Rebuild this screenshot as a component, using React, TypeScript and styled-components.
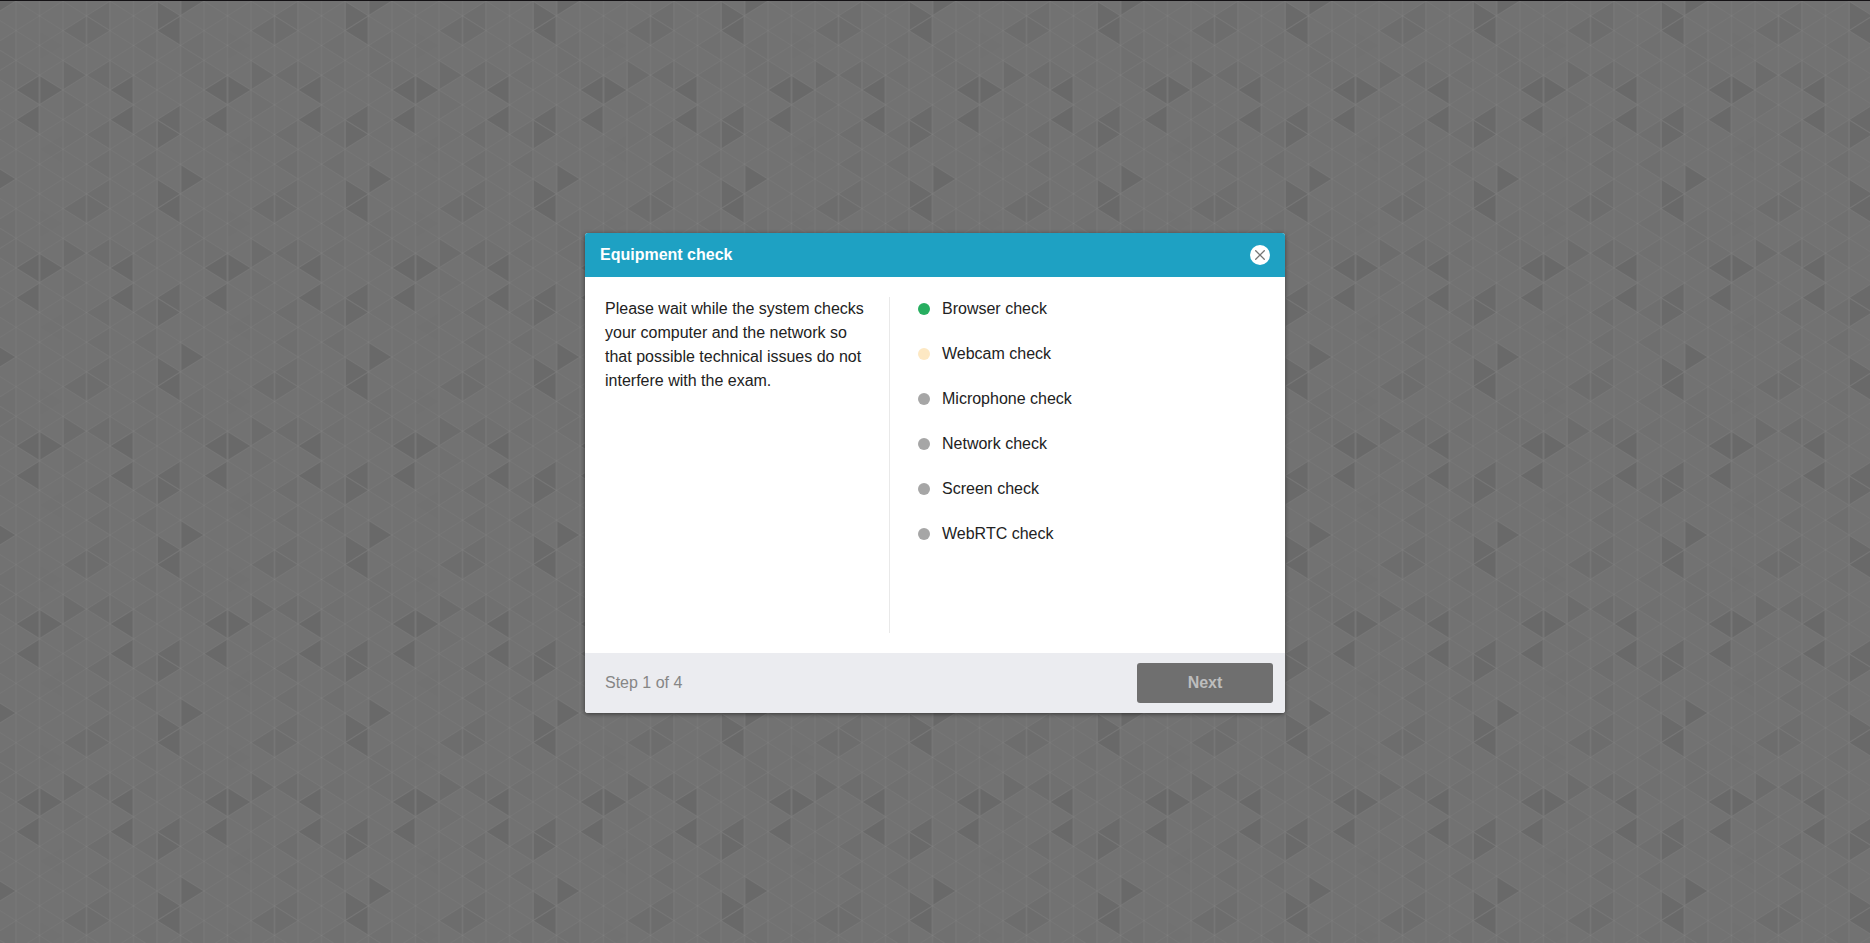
import React from "react";
import styled, { createGlobalStyle } from "styled-components";

const GlobalStyle = createGlobalStyle`
  *, *::before, *::after { box-sizing: border-box; }
  body {
    margin: 0;
    background: #727272;
    color: #222;
    font: 16px/24px "Liberation Sans", Arial, sans-serif;
  }
`;

const Page = styled.main`
  position: relative;
  display: flex;
  align-items: center;
  justify-content: center;
  min-height: 100vh;
  padding-top: 2px;
  border-top: 1px solid #141215;
`;

const Backdrop = styled.svg`
  position: absolute;
  inset: 0;
  width: 100%;
  height: 100%;
`;

const Dialog = styled.section`
  position: relative;
  display: flex;
  flex-direction: column;
  width: 100%;
  max-width: 700px;
  min-height: 480px;
  overflow: hidden;
  border-radius: 3px;
  background: #fff;
  box-shadow: 0 1px 4px rgba(0, 0, 0, 0.5);
`;

const Header = styled.header`
  display: flex;
  align-items: center;
  justify-content: space-between;
  height: 44px;
  padding: 0 15px;
  background: #1ea1c3;
`;

const Title = styled.h1`
  margin: 0;
  color: #fff;
  font-size: 16px;
  font-weight: 700;
`;

const CloseButton = styled.button`
  display: grid;
  place-items: center;
  width: 20px;
  height: 20px;
  padding: 0;
  border: 0;
  border-radius: 50%;
  background: #fff;
  color: #757575;
  cursor: pointer;
`;

const Body = styled.div`
  display: flex;
  flex: 1;
  padding: 20px;
`;

const Message = styled.p`
  flex: 0 0 285px;
  margin: 0;
  padding-right: 20px;
  border-right: 1px solid #e9e9e9;
`;

const Checks = styled.ul`
  display: flex;
  flex: 1;
  flex-direction: column;
  gap: 21px;
  margin: 0;
  padding: 0 0 0 28px;
  list-style: none;
`;

const Check = styled.li`
  display: flex;
  align-items: center;
  gap: 12px;
`;

const Dot = styled.span<{ $color: string }>`
  width: 12px;
  height: 12px;
  border-radius: 50%;
  background: ${(p) => p.$color};
`;

const Footer = styled.footer`
  display: flex;
  align-items: center;
  justify-content: space-between;
  height: 60px;
  padding: 0 12px 0 20px;
  background: #ebecf0;
  color: #868686;
`;

const NextButton = styled.button`
  width: 136px;
  height: 40px;
  padding: 0;
  border: 0;
  border-radius: 3px;
  background: #6f6f6f;
  color: #bdbdbd;
  font: inherit;
  font-weight: 700;
`;

const STATUS_COLORS = { passed: "#27ae60", running: "#fde8c3", pending: "#a6a6a6" };

const CHECKS: { label: string; status: keyof typeof STATUS_COLORS }[] = [
  { label: "Browser check", status: "passed" },
  { label: "Webcam check", status: "running" },
  { label: "Microphone check", status: "pending" },
  { label: "Network check", status: "pending" },
  { label: "Screen check", status: "pending" },
  { label: "WebRTC check", status: "pending" },
];

/* Triangular mesh: 8 columns by 6 rows per tile. */
const TILE_W = 188;
const TILE_H = 178;
const COL = TILE_W / 8;
const HALF = TILE_H / 12;

/* [column of the left edge, half-row of the centre, direction, opacity] */
const TRIANGLES: [number, number, "l" | "r", number][] = [
  [0, 6, "l", 0.08], [1, 6, "r", 0.08], [0, 8, "l", 0.08],
  [2, 5, "r", 0.05], [3, 5, "l", 0.045],
  [4, 6, "l", 0.08], [4, 8, "l", 0.08],
  [6, 8, "l", 0.07], [6, 9, "r", 0.07], [3, 9, "l", 0.04],
  [6, 2, "l", 0.08], [6, 1, "r", 0.07],
  [2, 2, "l", 0.045], [3, 2, "r", 0.045], [3, 1, "l", 0.035],
  [7, 12, "r", 0.08], [7, 0, "r", 0.08],
  [7, 5, "l", 0.02], [2, 7, "r", 0.015], [3, 11, "l", 0.025],
  [5, 11, "l", 0.025], [5, 9, "l", 0.025], [5, 3, "l", 0.015],
  [5, 5, "l", 0.015], [4, 5, "r", 0.02], [0, 5, "r", 0.015],
  [7, 4, "r", 0.015], [2, 9, "r", 0.01], [1, 10, "l", 0.01],
  [7, 9, "l", 0.01], [7, 3, "l", 0.015], [1, 3, "r", 0.01],
];

const trianglePoints = (col: number, half: number, dir: "l" | "r") => {
  const left = col * COL + 1;
  const right = (col + 1) * COL - 1;
  const y = half * HALF;
  const base = dir === "l" ? right : left;
  const tip = dir === "l" ? left : right;
  return `${tip},${y} ${base},${y - HALF + 1.5} ${base},${y + HALF - 1.5}`;
};

const verticals = Array.from({ length: 9 }, (_, i) => `M${i * COL} 0V${TILE_H}`).join("");
const diagonals = Array.from({ length: 22 }, (_, i) => {
  const y = (i - 8) * 2 * HALF;
  return `M0 ${y}l${TILE_W} ${8 * HALF}M0 ${y}l${TILE_W} ${-8 * HALF}`;
}).join("");

const TriangleBackdrop = () => (
  <Backdrop aria-hidden="true">
    <defs>
      <pattern id="mesh" x="16" y="0" width={TILE_W} height={TILE_H} patternUnits="userSpaceOnUse">
        <rect width={TILE_W} height={TILE_H} fill="#727272" />
        {TRIANGLES.map(([col, half, dir, opacity], i) => (
          <polygon key={i} points={trianglePoints(col, half, dir)} fill="#000" fillOpacity={opacity} />
        ))}
        <path d={diagonals} fill="none" stroke="#fff" strokeOpacity="0.028" />
        <path d={verticals} fill="none" stroke="#fff" strokeOpacity="0.03" strokeWidth="1.5" />
      </pattern>
    </defs>
    <rect width="100%" height="100%" fill="url(#mesh)" />
  </Backdrop>
);

export default function App() {
  return (
    <>
      <GlobalStyle />
      <Page>
        <TriangleBackdrop />
        <Dialog role="dialog" aria-labelledby="dialog-title">
          <Header>
            <Title id="dialog-title">Equipment check</Title>
            <CloseButton type="button" aria-label="Close">
              <svg width="10" height="10" viewBox="0 0 10 10" fill="none" stroke="currentColor" strokeWidth="1.3">
                <path d="M.3.3l9.4 9.4M9.7.3L.3 9.7" />
              </svg>
            </CloseButton>
          </Header>
          <Body>
            <Message>
              Please wait while the system checks your computer and the network so that possible
              technical issues do not interfere with the exam.
            </Message>
            <Checks>
              {CHECKS.map(({ label, status }) => (
                <Check key={label}>
                  <Dot $color={STATUS_COLORS[status]} />
                  {label}
                </Check>
              ))}
            </Checks>
          </Body>
          <Footer>
            <span>Step 1 of 4</span>
            <NextButton type="button" disabled>
              Next
            </NextButton>
          </Footer>
        </Dialog>
      </Page>
    </>
  );
}
